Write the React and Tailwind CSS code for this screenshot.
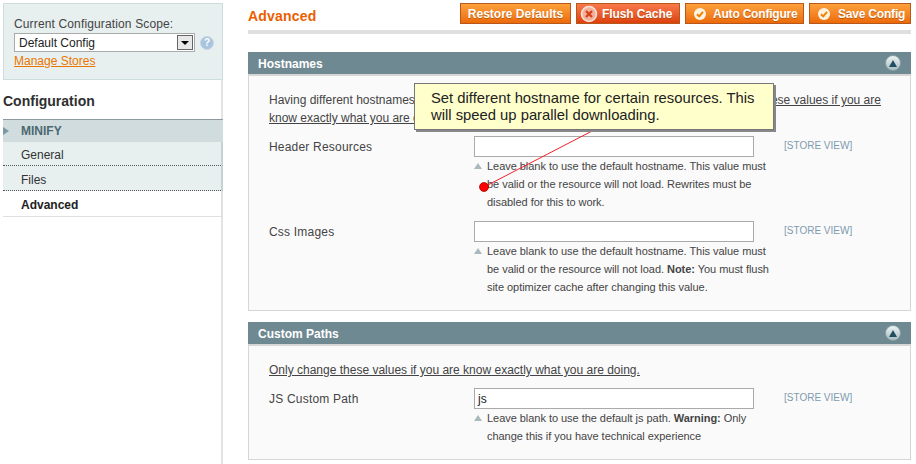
const buttonBase = 'h-[21px] flex items-center border border-[#b6581c] text-white text-[12px] font-bold [text-shadow:0_1px_0_rgba(150,70,0,0.6)]';

const CheckIcon = () => (
  <svg width="14" height="14" viewBox="0 0 14 14" className="shrink-0">
    <circle cx="7" cy="7" r="6" fill="#fff3e0" />
    <path d="M4 7.2 L6.2 9.3 L10 4.8" fill="none" stroke="#f18200" strokeWidth="2" />
  </svg>
);

const FlushIcon = () => (
  <svg width="18" height="18" viewBox="0 0 18 18" className="shrink-0">
    <circle cx="9" cy="9" r="7.5" fill="#f3b09a" stroke="#fbe3da" strokeWidth="1.5" />
    <path d="M6 6 L12 12 M12 6 L6 12" stroke="#d8401a" strokeWidth="2.4" />
  </svg>
);

const CollapseIcon = () => (
  <div className="w-[16px] h-[16px] rounded-full bg-gradient-to-b from-[#eef3f3] to-[#a9bdc1] border border-[#8ba2a9] flex items-center justify-center">
    <svg width="8" height="7" viewBox="0 0 8 7">
      <path d="M4 0 L8 7 L0 7 Z" fill="#1f4f60" />
    </svg>
  </div>
);

const SectionHeader = ({ title }) => (
  <div className="h-[22px] bg-[#6f8992] flex items-center justify-between pl-[10px] pr-[10px] text-white text-[12px] font-bold">
    <span className="pt-[1px]">{title}</span>
    <CollapseIcon />
  </div>
);

const Field = ({ label, value, children, className = 'mt-[9px]' }) => (
  <div className={`flex ${className}`}>
    <div className="w-[205px] pt-[1px] leading-[21px] tracking-[0.2px] text-[#444]">{label}</div>
    <div className="w-[280px]">
      <div className="h-[21px] border border-[#aaa] bg-white px-[3px] leading-[20px] text-[#222]">{value}</div>
      <div className="flex">
        <div className="w-[13px] pt-[6px] shrink-0">
          <svg width="8" height="6" viewBox="0 0 8 6" className="block">
            <path d="M4 0 L8 6 L0 6 Z" fill="#a9b9bd" />
          </svg>
        </div>
        <p className="text-[11px] leading-[18px] tracking-[-0.04px] text-[#444] w-[290px] shrink-0">{children}</p>
      </div>
    </div>
    <div className="ml-[30px] pt-[1px] leading-[18px] text-[10px] text-[#7e9bb0]">[STORE VIEW]</div>
  </div>
);

export default function App() {
  return (
    <div className="relative w-[916px] h-[464px] overflow-hidden bg-white flex font-['Liberation_Sans',Arial,sans-serif] text-[12px]">
      {/* Sidebar */}
      <div className="w-[220px] ml-[3px] shrink-0 h-full pt-[3px] flex flex-col">
        <div className="h-[77px] bg-[#e7efef] border border-[#cddddd] pl-[10px] pt-[12px]">
          <div className="text-[12px] leading-[16px] tracking-[0.14px] text-[#444]">Current Configuration Scope:</div>
          <div className="flex items-center mt-[1px]">
            <div className="w-[181px] h-[19px] border border-[#aaa] bg-white flex items-center justify-between pl-[4px] pr-[1px] text-[#222]">
              <span>Default Config</span>
              <div className="w-[16px] h-[15px] border border-[#666] bg-[#e8e8e8] flex items-center justify-center">
                <div className="w-0 h-0 border-l-[4px] border-r-[4px] border-t-[4px] border-l-transparent border-r-transparent border-t-black" />
              </div>
            </div>
            <div className="ml-[5px] w-[14px] h-[14px] rounded-full bg-[#a8c4de] border border-[#c6d8e8] text-white text-[10px] font-bold leading-[12px] text-center">?</div>
          </div>
          <div className="mt-[1px] text-[#ea7601] underline leading-[16px]">Manage Stores</div>
        </div>
        <div className="h-[39px] pt-[12px] text-[14px] font-bold leading-[18px] text-[#2f2f2f] border-r-2 border-[#e3e3e3]">Configuration</div>
        <div className="h-[23px] bg-[#d0dcdd] border-t border-[#8a9a9f] flex items-center text-[#4d6872] font-bold">
          <div className="w-0 h-0 border-t-[4px] border-b-[4px] border-l-[6px] border-t-transparent border-b-transparent border-l-[#7b98a3]" />
          <span className="ml-[12px]">MINIFY</span>
        </div>
        <div className="h-[24px] bg-[#e7efef] border-b border-r-2 border-b-[#555] border-r-[#c5d3d5] [border-bottom-style:dotted] pl-[18px] pt-[1px] leading-[24px] text-[#333]">General</div>
        <div className="h-[25px] bg-[#e7efef] border-b border-r-2 border-b-[#555] border-r-[#c5d3d5] [border-bottom-style:dotted] pl-[18px] pt-[2px] leading-[25px] text-[#333]">Files</div>
        <div className="h-[26px] border-b border-r-2 border-[#e0e0e0] pl-[18px] pt-[1px] leading-[26px] font-bold text-[#222]">Advanced</div>
        <div className="flex-1 border-r-2 border-[#e3e3e3]" />
      </div>

      {/* Main */}
      <div className="ml-[25px] w-[663px] shrink-0">
        <div className="h-[34px] border-b-4 border-[#dfdfdf] flex justify-between pt-[3px]">
          <h3 className="text-[14px] font-bold tracking-[0.2px] text-[#eb5e00] leading-[27px]">Advanced</h3>
          <div className="flex gap-[5px] h-[21px]">
            <button className={`${buttonBase} w-[111px] justify-center bg-gradient-to-b from-[#fda13b] to-[#ec6a06]`}>Restore Defaults</button>
            <button className={`${buttonBase} w-[104px] pl-[3px] gap-[4px] tracking-[-0.1px] bg-gradient-to-b from-[#f8794a] to-[#dd3f06] border-[#a8360c]`}><FlushIcon />Flush Cache</button>
            <button className={`${buttonBase} w-[119px] pl-[7px] gap-[6px] tracking-[-0.2px] bg-gradient-to-b from-[#fda13b] to-[#ec6a06]`}><CheckIcon />Auto Configure</button>
            <button className={`${buttonBase} w-[102px] pl-[7px] gap-[7px] tracking-[-0.2px] bg-gradient-to-b from-[#fda13b] to-[#ec6a06]`}><CheckIcon />Save Config</button>
          </div>
        </div>

        <div className="mt-[18px]">
          <SectionHeader title="Hostnames" />
          <div className="h-[237px] bg-[#fafafa] border border-t-2 border-[#d6d6d6] pl-[20px] pt-[15px]">
            <p className="leading-[18px] text-[#444] w-[620px]">
              Having different hostnames for different resources can speed up quick loading.{' '}
              <span className="underline decoration-[#444]">Only change these values if you are know exactly what you are doing.</span>
            </p>
            <Field label="Header Resources">
              Leave blank to use the default hostname. This value must be valid or the resource will not load. Rewrites must be disabled for this to work.
            </Field>
            <Field label="Css Images" className="mt-[10px]">
              Leave blank to use the default hostname. This value must be valid or the resource will not load. <b>Note:</b> You must flush site optimizer cache after changing this value.
            </Field>
          </div>
        </div>

        <div className="mt-[11px]">
          <SectionHeader title="Custom Paths" />
          <div className="h-[116px] bg-[#fafafa] border border-t-2 border-[#d6d6d6] pl-[20px] pt-[15px]">
            <p className="leading-[18px] text-[#444] underline decoration-[#444]">Only change these values if you are know exactly what you are doing.</p>
            <Field label="JS Custom Path" value="js">
              Leave blank to use the default js path. <b>Warning:</b> Only change this if you have technical experience
            </Field>
          </div>
        </div>
      </div>

      {/* Callout over the page */}
      <svg className="absolute left-0 top-0 pointer-events-none" width="916" height="464">
        <line x1="594" y1="130" x2="484" y2="187" stroke="#f0202a" strokeWidth="1" />
        <circle cx="484" cy="187" r="4.5" fill="#f00" stroke="#900" strokeWidth="0.7" />
      </svg>
      <div className="absolute left-[414px] top-[83px] w-[360px] h-[47px] bg-[#ffffcc] border border-[#777] shadow-[2px_2px_0_#888] pl-[16px] pr-[8px] pt-[6px] text-[14.8px] leading-[17px] text-[#222]">
        Set different hostname for certain resources. This will speed up parallel downloading.
      </div>
    </div>
  );
}
